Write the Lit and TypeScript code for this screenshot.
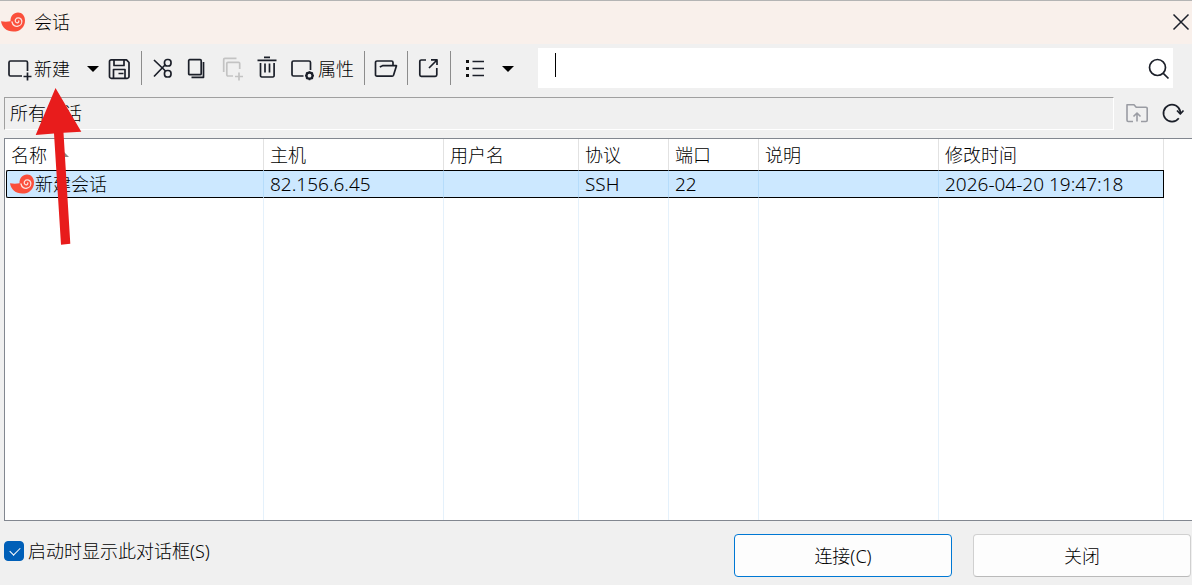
import { LitElement, html, svg, css } from "lit";
import { customElement, state } from "lit/decorators.js";

const icon = (body: unknown, cls = "ico") =>
  html`<svg class=${cls} viewBox="0 0 24 24" aria-hidden="true">${body}</svg>`;

const shell = html`<svg class="shell" viewBox="0 0 24 20" aria-hidden="true">
  <path class="shell-body" d="M0 9.300C3 9.800 6.500 9.800 9.500 9.300 9.300 4 12.500.4 17 .4c4.200 0 7 3.400 7 8 0 6.600-5 11.200-11.600 11.200C5.600 19.600 1 15.600 0 9.300Z"/>
  <path class="shell-line" d="M11 10c.8 3.600 3.400 4.800 6 4.200 2.900-.7 4.300-3.200 3.700-5.700-.7-2.300-3.100-3.300-5-2.300-1.800 1-1.900 3.400-.5 4.300 1.300.8 2.800 0 2.600-1.500"/>
</svg>`;

const caret = html`<svg class="caret" viewBox="0 0 12 6" aria-hidden="true"><path d="M0 0h12L6 6z"/></svg>`;

const icons = {
  create: svg`<path d="M15 19H3.500A1.500 1.500 0 0 1 2 17.500v-12A1.500 1.500 0 0 1 3.500 4h15.500a1.500 1.500 0 0 1 1.500 1.500V14M20.500 15.500v8M16.500 19.500h8"/>`,
  save: svg`<path d="M4 2.800h14.500l2.500 2.700v14a1.800 1.800 0 0 1-1.800 1.800H3.300A1.800 1.800 0 0 1 1.500 19.500v-15A1.700 1.700 0 0 1 3.200 2.800ZM6 3v5.500h10V3M5.500 21v-8.500H17V21M10.500 16.500h5"/>`,
  cut: svg`<path d="M3 3l11.500 11M3 19.500l11.500-12"/><rect x="13.500" y="2.500" width="6.500" height="6.500" rx="2.800"/><rect x="13.500" y="13.500" width="6.500" height="6.500" rx="2.800"/>`,
  copy: svg`<rect x="2.700" y="2.700" width="12.500" height="15" rx="1"/><path d="M17.500 5v15.300H5.500"/>`,
  paste: svg`<path d="M2.700 15V2.500a1.200 1.200 0 0 1 1.200-1.200h11.600M12 19H7a1.200 1.200 0 0 1-1.200-1.200V6.500A1.200 1.200 0 0 1 7 5.300h10.500a1.200 1.200 0 0 1 1.200 1.200V12M18 15.500v8M14 19.500h8"/>`,
  remove: svg`<path d="M8 .3h6M1.500 3.300h19M4.500 6v12.500A1.300 1.300 0 0 0 5.800 20h11a1.300 1.300 0 0 0 1.300-1.500V6M9 6.500v9M13.500 6.500v9"/>`,
  props: svg`<path d="M13.500 19H3.500A1.500 1.500 0 0 1 2 17.500v-12A1.500 1.500 0 0 1 3.500 4h15.500a1.500 1.500 0 0 1 1.500 1.500V13"/><circle class="bold" cx="19.500" cy="18.700" r="3"/><path d="M19.500 14.300v1.200M19.500 22v1.200M15.100 18.700h1.200M22.700 18.700h1.200M16.300 15.500l1 1M21.700 20.900l1 1M16.300 21.900l1-1M21.700 16.500l1-1"/>`,
  folder: svg`<path d="M19 8V5.500A1.500 1.500 0 0 0 17.500 4H3a1.500 1.500 0 0 0-1.500 1.500v12A1.500 1.500 0 0 0 3 19.200h15.200a1.500 1.500 0 0 0 1.300-1L22.500 8.700H8.500L5.800 10"/>`,
  open: svg`<path d="M9 3H4.300A1.500 1.500 0 0 0 2.800 4.500v13.300a1.500 1.500 0 0 0 1.500 1.500h14a1.500 1.500 0 0 0 1.500-1.500V11M12 11l8-8M14 2.800h6V8"/>`,
  list: svg`<path d="M9.500 4.500H21M9.500 11.500H21M9.500 18.500H21"/><path class="dots" d="M3 3h3v3h-3zM3 10h3v3h-3zM3 17h3v3h-3z"/>`,
  search: svg`<circle cx="10.500" cy="10.500" r="8"/><path d="M16.300 16.300l5.200 5.200"/>`,
  up: svg`<path d="M8 20.500H3.200a1.200 1.200 0 0 1-1.200-1.200V3.700h7l2.200 2.500H21a1.200 1.200 0 0 1 1.200 1.200v11.900a1.200 1.200 0 0 1-1.200 1.200h-5M12 20.500v-8M8.500 15.500L12 12l3.500 3.500"/>`,
  refresh: svg`<path d="M17.800 17.200A8.500 8.500 0 1 1 19.300 10.500V12.500M16 9.500l3.300 3.500 3.200-3.500"/>`,
  close: svg`<path d="M4.500 4.500l15 15M19.500 4.500l-15 15"/>`,
};

const columns = [
  { key: "name", label: "名称", cls: "c-name" },
  { key: "host", label: "主机", cls: "c-host" },
  { key: "user", label: "用户名", cls: "c-user" },
  { key: "protocol", label: "协议", cls: "c-short" },
  { key: "port", label: "端口", cls: "c-short" },
  { key: "note", label: "说明", cls: "c-host" },
  { key: "modified", label: "修改时间", cls: "c-date" },
] as const;

const sessions = [
  { name: "新建会话", host: "82.156.6.45", user: "", protocol: "SSH", port: "22", note: "", modified: "2026-04-20 19:47:18" },
];

@customElement("app-root")
export class AppRoot extends LitElement {
  @state() private selected = 0;

  static styles = css`
    :host {
      display: flex;
      flex-direction: column;
      position: relative;
      box-sizing: border-box;
      min-height: 100vh;
      overflow: hidden;
      background: #f0f0f0;
      color: #000;
      font: 300 18px/24px "Noto Sans", "Noto Sans CJK SC", sans-serif;
    }
    * { box-sizing: border-box; }
    button, input { font: inherit; color: inherit; }
    button { display: flex; align-items: center; border: 0; padding: 0; background: none; white-space: nowrap; }
    svg { display: block; flex: none; overflow: visible; }
    .ico { width: 24px; height: 24px; fill: none; stroke: #1b1f29; stroke-width: 1.7; stroke-linecap: butt; stroke-linejoin: round; }
    .bold { stroke-width: 2.2; }
    .dots { fill: #111; stroke: none; }
    .caret { width: 12px; height: 6px; }
    .shell { width: 24px; height: 20px; }
    .shell-body { fill: #fb4f3b; }
    .shell-line { fill: none; stroke: #fbe3df; stroke-width: 1.3; stroke-linecap: round; }

    .title { display: flex; align-items: center; gap: 9px; height: 44px; border-top: 1px solid #b4b4b4; padding: 0 0 2px 1px; background: #f9f0eb; }
    .title h1 { flex: 1; margin: 0; font: inherit; }
    .close { width: 23px; }
    .close .ico { stroke-width: 1.5; }

    .tools { display: flex; align-items: center; height: 50px; padding: 0 19px 2px 7px; }
    .tools button { padding-top: 2px; }
    .tools .tool { width: 35px; padding-left: 5px; }
    .tools .create { gap: 3px; width: 76px; }
    .tools .props { gap: 4px; width: 75px; padding-left: 4px; }
    .tools .more { justify-content: center; width: 20px; }
    .tools .view { width: 43px; padding-left: 8px; }
    .sep { width: 1px; height: 34px; margin: 0 4px 0 3px; background: #8c8c8c; }
    .tool:disabled .ico { stroke: #c3c3c3; }
    .search { display: flex; align-items: center; flex: 1; height: 40px; margin-left: 20px; padding: 0 2px 0 17px; background: #fff; }
    .search input { flex: 1; min-width: 0; border: 0; outline: 0; padding: 0; background: none; }
    .cursor { width: 1px; height: 24px; margin-bottom: 6px; background: #000; }

    .path { display: flex; align-items: center; gap: 11px; padding: 3px 7px 8px 4px; }
    .crumb { flex: 1; height: 33px; padding: 3px 5px; border: 1px solid; border-color: #a0a0a0 #fff #fff #a0a0a0; }
    .nav { display: flex; gap: 12px; padding-bottom: 2px; }
    .nav .muted .ico { stroke: #9a9ca3; stroke-width: 1.6; }

    .grid { flex: 1; display: flex; margin-left: 4px; border: solid #828790; border-width: 1px 0 1px 1px; padding-left: 1px; background: #fff; }
    table { width: 100%; table-layout: fixed; border-spacing: 0; }
    th, td { padding: 0 6px; font-weight: 300; text-align: left; white-space: nowrap; border-right: 1px solid #e5f1fb; }
    th { height: 31px; border-color: #e2e2e2; }
    th:first-child { padding-left: 5px; }
    th:last-child, td:last-child { border-right: 0; }
    .c-name { width: 258px; }
    .c-host { width: 180px; }
    .c-user { width: 135px; }
    .c-short { width: 90px; }
    .c-date { width: 225px; }
    .head { display: flex; align-items: center; gap: 10px; }
    .sort { width: 12px; height: 6px; margin-bottom: 2px; fill: #8b8b8b; }
    .row td { height: 28px; border-top: 1px solid transparent; border-bottom: 1px solid transparent; font-size: 19px; }
    .row td:first-child { font-size: 18px; }
    .on td { border-top-color: #000; border-bottom-color: #000; border-right-color: #b5dcfb; background: #cce8ff; }
    .on td:first-child { border-left: 1px solid #000; border-radius: 2px 0 0 2px; padding-left: 3px; }
    .on .modified { border-right-color: #000; }
    .on .rest { border-color: transparent; background: none; }
    .label { display: flex; align-items: center; gap: 1px; }
    .pad td { height: auto; }

    .foot { display: flex; align-items: center; gap: 21px; padding: 13px 1px 8px 4px; }
    .check { display: flex; align-items: center; gap: 4px; flex: 1; padding-bottom: 10px; }
    .check input { appearance: none; width: 20px; height: 20px; margin: 0; border: 1px solid #005fb8; border-radius: 4px; background: #fff; }
    .check input:checked { background: #005fb8; }
    .check input:checked::after { content: ""; display: block; width: 9px; height: 5px; margin: 5px 0 0 5px; border: solid #fff; border-width: 0 0 1px 1px; transform: rotate(-45deg); }
    .btn { justify-content: center; width: 218px; height: 43px; border: 1px solid #d0d0d0; border-bottom-color: #bababa; border-radius: 4px; background: #fdfdfd; }
    .primary { border-color: #0078d4; }

    .pointer { position: absolute; left: 35px; top: 88px; width: 47px; height: 157px; fill: #e81c1c; pointer-events: none; }
  `;

  private cell(row: (typeof sessions)[number], key: (typeof columns)[number]["key"]) {
    return key === "name"
      ? html`<td><span class="label">${shell}${row.name}</span></td>`
      : html`<td class=${key}>${row[key]}</td>`;
  }

  render() {
    return html`
      <header class="title">
        ${shell}
        <h1>会话</h1>
        <button class="close" aria-label="关闭">${icon(icons.close)}</button>
      </header>
      <div class="tools" role="toolbar">
        <button class="create">${icon(icons.create)}新建</button>
        <button class="more" aria-label="更多新建选项">${caret}</button>
        <button class="tool" aria-label="保存">${icon(icons.save)}</button>
        <span class="sep"></span>
        <button class="tool" aria-label="剪切">${icon(icons.cut)}</button>
        <button class="tool" aria-label="复制">${icon(icons.copy)}</button>
        <button class="tool" aria-label="粘贴" disabled>${icon(icons.paste)}</button>
        <button class="tool" aria-label="删除">${icon(icons.remove)}</button>
        <button class="props">${icon(icons.props)}属性</button>
        <span class="sep"></span>
        <button class="tool" aria-label="新建文件夹">${icon(icons.folder)}</button>
        <span class="sep"></span>
        <button class="tool" aria-label="打开">${icon(icons.open)}</button>
        <span class="sep"></span>
        <button class="view" aria-label="视图">${icon(icons.list)}</button>
        <button class="more" aria-label="视图选项">${caret}</button>
        <div class="search">
          <span class="cursor"></span>
          <input type="text" aria-label="搜索" />
          <button aria-label="搜索">${icon(icons.search)}</button>
        </div>
      </div>
      <div class="path">
        <div class="crumb">所有会话</div>
        <div class="nav">
          <button class="muted" aria-label="上一级">${icon(icons.up)}</button>
          <button aria-label="刷新">${icon(icons.refresh)}</button>
        </div>
      </div>
      <main class="grid">
        <table>
          <thead>
            <tr>
              ${columns.map(
                (c, i) => html`<th class=${c.cls} scope="col">
                  ${i === 0
                    ? html`<span class="head">${c.label}<svg class="sort" viewBox="0 0 12 6"><path d="M0 6h12L6 0z"/></svg></span>`
                    : c.label}
                </th>`
              )}
              <th></th>
            </tr>
          </thead>
          <tbody>
            ${sessions.map(
              (s, i) => html`<tr class="row ${i === this.selected ? "on" : ""}" @click=${() => (this.selected = i)}>
                ${columns.map((c) => this.cell(s, c.key))}
                <td class="rest"></td>
              </tr>`
            )}
            <tr class="pad">${columns.map(() => html`<td></td>`)}<td></td></tr>
          </tbody>
        </table>
      </main>
      <footer class="foot">
        <label class="check"><input type="checkbox" checked />启动时显示此对话框(S)</label>
        <button class="btn primary">连接(C)</button>
        <button class="btn">关闭</button>
      </footer>
      <svg class="pointer" viewBox="0 0 47 157" aria-hidden="true">
        <path d="M20.500 0L46.300 43.700 28.500 44.700 35.300 155.700 26 156.700 19 45.500.700 47z"/>
      </svg>
    `;
  }
}
